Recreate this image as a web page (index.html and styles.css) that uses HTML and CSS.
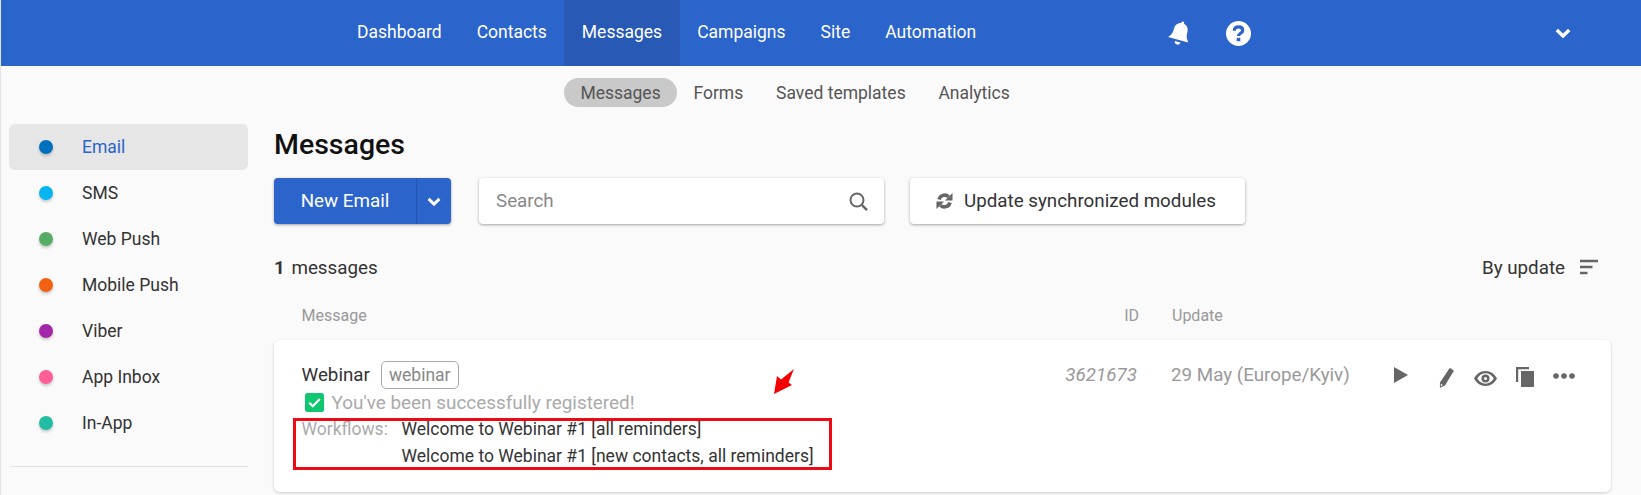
FILE: index.html
```html
<!DOCTYPE html>
<html lang="en">
<head>
<meta charset="utf-8">
<title>Messages</title>
<link rel="stylesheet" href="styles.css">
</head>
<body>
<header class="topbar">
  <nav class="topnav">
    <a class="topnav-item">Dashboard</a>
    <a class="topnav-item">Contacts</a>
    <a class="topnav-item is-active">Messages</a>
    <a class="topnav-item">Campaigns</a>
    <a class="topnav-item">Site</a>
    <a class="topnav-item">Automation</a>
  </nav>
  <div class="top-icons">
    <svg class="icon-bell" viewBox="0 0 24 28"><path fill="#fff" d="M12 1c1 0 1.600.7 1.600 1.600v.6c3.800.8 6 3.900 6 8 0 5.200 1.100 7.300 3.200 9.300.4.400.2 1.200-.5 1.200H1.700c-.7 0-.9-.8-.5-1.200 2.100-2 3.200-4.100 3.200-9.300 0-4.100 2.200-7.200 6-8v-.6C10.400 1.700 11 1 12 1z"/><path fill="#fff" d="M8.800 24h6.400c0 1.800-1.400 3-3.200 3s-3.200-1.200-3.200-3z"/></svg>
    <svg class="icon-help" viewBox="0 0 25 25"><circle cx="12.500" cy="12.500" r="12.500" fill="#fff"/><path fill="none" stroke="#2b64cb" stroke-width="3.200" d="M8.300 9.800c0-2.500 1.800-3.900 4.200-3.900 2.500 0 4.200 1.400 4.200 3.500 0 2.900-4.200 2.800-4.200 5.600"/><rect x="10.700" y="16.800" width="3.600" height="3.400" fill="#2b64cb"/></svg>
    <svg class="icon-chevron" viewBox="0 0 16 10"><path fill="none" stroke="#fff" stroke-width="3.400" d="M1.800 2 8 8l6.200-6"/></svg>
  </div>
</header>

<nav class="subnav">
  <a class="subnav-item is-active">Messages</a>
  <a class="subnav-item">Forms</a>
  <a class="subnav-item">Saved templates</a>
  <a class="subnav-item">Analytics</a>
</nav>

<div class="layout">
  <aside class="sidebar">
    <ul class="channels">
      <li class="channel is-active"><span class="dot dot-email"></span>Email</li>
      <li class="channel"><span class="dot dot-sms"></span>SMS</li>
      <li class="channel"><span class="dot dot-web"></span>Web Push</li>
      <li class="channel"><span class="dot dot-mobile"></span>Mobile Push</li>
      <li class="channel"><span class="dot dot-viber"></span>Viber</li>
      <li class="channel"><span class="dot dot-inbox"></span>App Inbox</li>
      <li class="channel"><span class="dot dot-inapp"></span>In-App</li>
    </ul>
    <hr class="side-rule">
  </aside>

  <main class="main">
    <h1 class="title">Messages</h1>

    <div class="toolbar">
      <div class="split-btn">
        <button class="split-main">New Email</button>
        <button class="split-caret" aria-label="More">
          <svg class="caret-icon" viewBox="0 0 16 10"><path fill="none" stroke="#fff" stroke-width="3.400" d="M1.800 2 8 8l6.200-6"/></svg>
        </button>
      </div>
      <label class="search">
        <input class="search-input" placeholder="Search">
        <svg class="search-icon" viewBox="0 0 19 19"><circle cx="8" cy="8" r="6.500" fill="none" stroke="#666" stroke-width="2"/><path stroke="#666" stroke-width="2.400" d="m12.800 12.800 5.200 5.400"/></svg>
      </label>
      <button class="sync-btn">
        <svg class="sync-icon" viewBox="0 0 18 18"><g fill="none" stroke="#666" stroke-width="3.800"><path d="M3.200 7.400A6 6 0 0 1 13.300 4.600"/><path d="M14.800 10.600A6 6 0 0 1 4.700 13.400"/></g><path fill="#666" d="M17.500.5v8h-8zM.5 17.500v-8h8z"/></svg>
        Update synchronized modules
      </button>
    </div>

    <div class="summary">
      <span class="count"><b class="count-num">1</b> messages</span>
      <span class="sort">By update
        <svg class="sort-icon" viewBox="0 0 18 16"><path stroke="#666" stroke-width="2.400" d="M0 2h18M0 8h12.500M0 14h7.500"/></svg>
      </span>
    </div>

    <div class="grid-row col-head">
      <span>Message</span>
      <span class="cell-id">ID</span>
      <span class="head-update">Update</span>
    </div>

    <article class="card grid-row">
      <div class="info">
        <div class="name-row">
          <span class="name">Webinar</span>
          <span class="tag">webinar</span>
        </div>
        <div class="subject">
          <svg class="check" viewBox="0 0 19 19"><rect width="19" height="19" rx="2.500" fill="#0fc76e"/><path fill="none" stroke="#fff" stroke-width="2.200" d="m4.300 9.800 3.500 3.500 7-7.300"/></svg>
          <span class="subject-text">You've been successfully registered!</span>
        </div>
        <div class="workflows">
          <span class="wf-label">Workflows:</span>
          <div class="wf-list">
            <div>Welcome to Webinar #1 [all reminders]</div>
            <div>Welcome to Webinar #1 [new contacts, all reminders]</div>
          </div>
        </div>
      </div>
      <span class="cell-id msg-id">3621673</span>
      <span class="msg-date">29 May (Europe/Kyiv)</span>
      <div class="actions">
        <svg class="a-play" viewBox="0 0 14 16"><path fill="#666" d="M0 0l14 8-14 8z"/></svg>
        <svg class="a-edit" viewBox="0 0 15 20"><path fill="#666" d="M10.300.4c.9-.6 4.400 1.600 4.300 2.800L6 17.600.9 19.800l.1-5.400z"/><path fill="#fff" d="M1.900 15.800l2 1.300-2 1.100z"/></svg>
        <svg class="a-eye" viewBox="0 0 23 15"><path fill="#666" fill-rule="evenodd" d="M11.500 0C6.300 0 2.300 3 0 7.500 2.300 12 6.300 15 11.500 15S20.700 12 23 7.500C20.700 3 16.700 0 11.500 0zm0 2.300c3.300 0 6.200 1.900 8.300 5.200-2.100 3.300-5 5.200-8.300 5.200S5.300 10.800 3.200 7.500c2.100-3.300 5-5.200 8.300-5.200z"/><circle cx="11.500" cy="7.500" r="4" fill="#666"/><circle cx="11.500" cy="7.500" r="1.500" fill="#fff"/></svg>
        <svg class="a-copy" viewBox="0 0 18 20"><path fill="#666" d="M0 0h13v2.200H2.200V15H0z"/><rect x="5" y="4" width="13" height="16" fill="#666"/></svg>
        <svg class="a-more" viewBox="0 0 22 6"><circle cx="3" cy="3" r="2.800" fill="#666"/><circle cx="11" cy="3" r="2.800" fill="#666"/><circle cx="19" cy="3" r="2.800" fill="#666"/></svg>
      </div>
      <div class="mark-box"></div>
      <svg class="mark-arrow" viewBox="0 0 20 25"><path fill="#f40000" d="M20 0 14.500 13.500l3.500 2.500L0 25 3 7l4 3.500z"/></svg>
    </article>
  </main>
</div>
</body>
</html>
```

FILE: styles.css
```css
* { box-sizing: border-box; }

html, body { height: 100%; }

body {
  margin: 0;
  overflow: hidden;
  background: #fafafa;
  border-left: 1px solid #e4e4e4;
  color: #333;
  font: 16px/1.2 Roboto, "Liberation Sans", sans-serif;
}

/* Top bar */
.topbar {
  display: flex;
  align-items: stretch;
  height: 66px;
  margin-left: -1px;
  padding-left: 339.500px;
  background: #2b64cb;
}

.topnav { display: flex; }

.topnav-item {
  display: flex;
  align-items: center;
  padding: 0 17.500px 2px;
  color: #fff;
  font-size: 17.500px;
}

.topnav-item.is-active { background: #2859b5; }

.top-icons {
  display: flex;
  flex: 1;
  align-items: center;
  padding-left: 175px;
}

.icon-bell { width: 22px; height: 26px; transform: rotate(15deg); }
.icon-help { width: 25px; height: 25px; margin-left: 35px; }
.icon-chevron { width: 16px; height: 10px; margin-left: 304px; }

/* Sub navigation */
.subnav {
  display: flex;
  height: 29px;
  margin-top: 12px;
  padding-left: 563px;
}

.subnav-item {
  display: flex;
  align-items: center;
  padding: 1px 16.400px 0;
  border-radius: 15px;
  color: #555;
  font-size: 17.500px;
}

.subnav-item.is-active { background: #c9c9c9; }

/* Two-column layout */
.layout {
  display: flex;
  margin-top: 17px;
  padding-left: 8px;
}

.sidebar { flex: none; width: 239px; }

.channels { margin: 0; padding: 0; list-style: none; }

.channel {
  display: flex;
  align-items: center;
  height: 46px;
  padding: 1px 0 0 30px;
  border-radius: 6px;
  color: #333;
  font-size: 17.500px;
}

.channel.is-active { background: #e6e6e6; color: #2b64cb; }

.dot {
  flex: none;
  width: 14px;
  height: 14px;
  margin: -1px 29px 0 0;
  border-radius: 50%;
  box-shadow: 0 2px 3px rgba(0, 0, 0, .2);
}

.dot-email { background: #0071bc; }
.dot-sms { background: #06b4f2; }
.dot-web { background: #56ab65; }
.dot-mobile { background: #f26111; }
.dot-viber { background: #a326a8; }
.dot-inbox { background: #ff5e99; }
.dot-inapp { background: #22bda3; }

.side-rule {
  margin: 20px 0 0 2px;
  border: 0;
  border-top: 1px solid #e0e0e0;
}

/* Main column */
.main {
  flex: none;
  width: 1337px;
  margin-left: 26px;
}

.title {
  height: 40px;
  margin: 0;
  color: #111;
  font-size: 28.500px;
  font-weight: 500;
  line-height: 42px;
}

.toolbar {
  display: flex;
  height: 46px;
  margin-top: 14px;
}

.split-btn {
  display: flex;
  width: 177px;
  border-radius: 4px;
  background: #2b64cb;
  box-shadow: 0 1px 3px rgba(0, 0, 0, .35);
}

.split-main, .split-caret {
  border: 0;
  background: none;
  color: #fff;
  font: inherit;
  font-size: 18.800px;
}

.split-main { width: 143px; padding: 0; border-right: 1px solid #2454ac; }
.split-caret { display: flex; flex: 1; align-items: center; justify-content: center; padding: 0; }
.caret-icon { width: 14px; height: 9px; }

.search {
  display: flex;
  align-items: center;
  width: 405px;
  margin-left: 28px;
  padding: 1px 16px 0 17px;
  border-radius: 4px;
  background: #fff;
  box-shadow: 0 1px 3px rgba(0, 0, 0, .35);
}

.search-input {
  flex: 1;
  min-width: 0;
  padding: 0;
  border: 0;
  outline: 0;
  background: none;
  font: inherit;
  font-size: 18.800px;
}

.search-input::placeholder { color: #888; opacity: 1; }
.search-icon { width: 19px; height: 19px; margin-top: -1px; }

.sync-btn {
  display: flex;
  align-items: center;
  width: 335px;
  margin-left: 26px;
  padding: 0 0 0 26px;
  border: 0;
  border-radius: 4px;
  background: #fff;
  box-shadow: 0 1px 3px rgba(0, 0, 0, .35);
  color: #333;
  font: inherit;
  font-size: 18.800px;
}

.sync-icon { width: 17px; height: 18px; margin-right: 11px; }

.summary {
  display: flex;
  align-items: center;
  justify-content: space-between;
  height: 24px;
  margin-top: 31px;
  padding: 2px 13px 0 0;
  font-size: 18.800px;
}

.count-num { margin-right: 2px; font-weight: 700; }

.sort { display: flex; align-items: center; }
.sort-icon { width: 18px; height: 16px; margin: -2px 0 0 15px; }

/* Table-like rows */
.grid-row {
  display: grid;
  grid-template-columns: 1fr 114px 223px 181px;
  padding: 0 36px 0 27.500px;
}

.cell-id { padding-right: 34px; text-align: right; }

.col-head {
  height: 20px;
  margin-top: 27px;
  color: #999;
  font-size: 16px;
  line-height: 20px;
}

.col-head .cell-id { padding-right: 32px; }

.head-update { padding-left: 1px; }

.card {
  position: relative;
  height: 152px;
  margin-top: 14px;
  padding-top: 21px;
  border-radius: 6px;
  background: #fff;
  box-shadow: 0 1px 3px rgba(0, 0, 0, .18);
  font-size: 18.800px;
}

.name-row { display: flex; align-items: center; height: 28px; }

.name { color: #333; }

.tag {
  display: flex;
  align-items: center;
  height: 28px;
  margin-left: 11px;
  padding: 0 7px;
  border: 1px solid #aaa;
  border-radius: 5px;
  color: #888;
  font-size: 17.500px;
}

.subject {
  display: flex;
  align-items: center;
  height: 27.200px;
  padding-left: 3px;
  color: #aaa;
  font-size: 18.900px;
}

.subject-text { padding-top: 2px; }

.check { flex: none; width: 19px; height: 19px; margin-right: 8px; }

.workflows { display: flex; line-height: 27px; }

.wf-label { flex: none; width: 100px; color: #aaa; font-size: 17.500px; }

.wf-list { color: #333; font-size: 17.500px; }

.msg-id { padding-top: 3px; color: #999; font-style: italic; }
.msg-date { padding-top: 3px; color: #999; }

.actions { display: flex; align-items: flex-start; }

.a-play { width: 14px; height: 16px; margin-top: 6px; }
.a-edit { width: 15px; height: 20px; margin-top: 7px; margin-left: 31px; }
.a-eye { width: 23px; height: 15px; margin-top: 10px; margin-left: 20px; }
.a-copy { width: 18px; height: 20px; margin-top: 6px; margin-left: 19px; }
.a-more { width: 22px; height: 6px; margin-top: 12px; margin-left: 19px; }

/* Red annotation drawn over the card */
.mark-box {
  position: absolute;
  top: 78px;
  left: 19px;
  width: 539px;
  height: 52px;
  border: 3px solid #ee0a14;
}

.mark-arrow {
  position: absolute;
  top: 29px;
  left: 500px;
  width: 20px;
  height: 25px;
}
```
